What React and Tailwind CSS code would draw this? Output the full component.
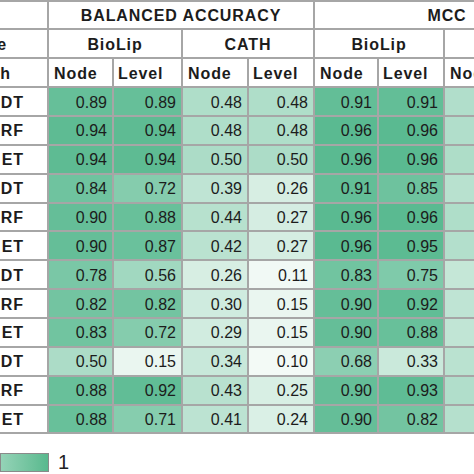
import React from "react";

const rows = [
  ["DT", [0.89, 0.89, 0.48, 0.48, 0.91, 0.91, 0.47, 0.5]],
  ["RF", [0.94, 0.94, 0.48, 0.48, 0.96, 0.96, 0.47, 0.5]],
  ["ET", [0.94, 0.94, 0.5, 0.5, 0.96, 0.96, 0.49, 0.5]],
  ["DT", [0.84, 0.72, 0.39, 0.26, 0.91, 0.85, 0.43, 0.3]],
  ["RF", [0.9, 0.88, 0.44, 0.27, 0.96, 0.96, 0.48, 0.3]],
  ["ET", [0.9, 0.87, 0.42, 0.27, 0.96, 0.95, 0.46, 0.3]],
  ["DT", [0.78, 0.56, 0.26, 0.11, 0.83, 0.75, 0.36, 0.2]],
  ["RF", [0.82, 0.82, 0.3, 0.15, 0.9, 0.92, 0.39, 0.2]],
  ["ET", [0.83, 0.72, 0.29, 0.15, 0.9, 0.88, 0.38, 0.2]],
  ["DT", [0.5, 0.15, 0.34, 0.1, 0.68, 0.33, 0.42, 0.2]],
  ["RF", [0.88, 0.92, 0.43, 0.25, 0.9, 0.93, 0.47, 0.3]],
  ["ET", [0.88, 0.71, 0.41, 0.24, 0.9, 0.82, 0.45, 0.3]],
];

function shade(v) {
  const t = Math.max(0, Math.min(1, (v - 0.1) / 0.86));
  const r = Math.round(243 - (243 - 90) * t);
  const g = Math.round(250 - (250 - 186) * t);
  const b = Math.round(246 - (246 - 145) * t);
  return `rgb(${r},${g},${b})`;
}

const head = "bg-white flex items-center pt-[2px] font-bold text-[16px] tracking-[0.9px] text-[#1c1c1c] whitespace-nowrap overflow-hidden";

export default function App() {
  return (
    <div className="w-[474px] h-[474px] overflow-hidden bg-white font-['Liberation_Sans',Arial,sans-serif]">
      <div className="grid w-max grid-cols-[47px_63px_67px_64px_64px_62px_64px_72px_60px] auto-rows-[26.86px] gap-[2px] bg-[#a6a6a6] pt-[1.5px] pb-[2px]">
        <div className="bg-white" />
        <div className={`${head} col-span-4 justify-center`}>BALANCED ACCURACY</div>
        <div className={`${head} col-span-4 justify-center`}>MCC</div>

        <div className={`${head} justify-end pr-[40px]`}>Tree type</div>
        <div className={`${head} col-span-2 justify-center`}>BioLip</div>
        <div className={`${head} col-span-2 justify-center`}>CATH</div>
        <div className={`${head} col-span-2 justify-center`}>BioLip</div>
        <div className={`${head} col-span-2 justify-center`}>CATH</div>

        <div className={`${head} justify-end pr-[36px]`}>Approach</div>
        <div className={`${head} pl-[5px]`}>Node</div>
        <div className={`${head} pl-[4px]`}>Level</div>
        <div className={`${head} pl-[5px]`}>Node</div>
        <div className={`${head} pl-[4px]`}>Level</div>
        <div className={`${head} pl-[5px]`}>Node</div>
        <div className={`${head} pl-[4px]`}>Level</div>
        <div className={`${head} pl-[5px]`}>Node</div>
        <div className={`${head} pl-[4px]`}>Level</div>

        {rows.map(([label, vals], i) => (
          <React.Fragment key={i}>
            <div className={`${head} justify-end pr-[23px]`}>{label}</div>
            {vals.map((v, j) => (
              <div
                key={j}
                className="flex items-center justify-end pr-[5px] pt-[2px] text-[16px] text-[#1c1c1c] whitespace-nowrap"
                style={{ backgroundColor: shade(v) }}
              >
                {v.toFixed(2)}
              </div>
            ))}
          </React.Fragment>
        ))}
      </div>

      <div className="mt-[18px] flex items-center gap-[9px]">
        <div className="h-[19px] w-[49px] border border-[#8a8a8a] bg-gradient-to-r from-[#94d3b7] to-[#58b98e]" />
        <span className="text-[20px] leading-none text-[#222]">1</span>
      </div>
    </div>
  );
}
